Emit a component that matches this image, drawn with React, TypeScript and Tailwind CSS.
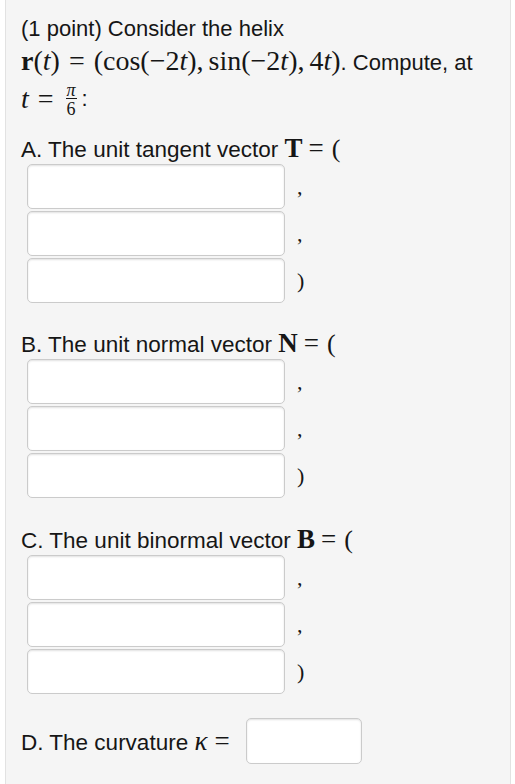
import React from 'react';

const serif = "font-['Liberation_Serif','Times_New_Roman',serif]";

function AnswerBox({ mark }: { mark: string }) {
  return (
    <div className="flex items-center">
      <div className="w-[258px] h-[45px] bg-white border border-[#cbcbcb] rounded-[5px] shadow-[inset_0_1px_2px_rgba(0,0,0,0.12)]" />
      <span className={`${serif} ml-[12px] text-[22px] leading-none`}>{mark}</span>
    </div>
  );
}

function VectorPart({ label, symbol, marginTop }: { label: string; symbol: string; marginTop: string }) {
  return (
    <div className={marginTop}>
      <div className="text-[22.5px] leading-[26px]">
        {label} <b className={`${serif} text-[27px]`}>{symbol}</b>
        <span className={`${serif} text-[27px] ml-[6px]`}>=</span>
        <span className={`${serif} text-[26px] ml-[8px]`}>(</span>
      </div>
      <div className="mt-[1px] ml-[6px] flex flex-col gap-[2px]">
        <AnswerBox mark="," />
        <AnswerBox mark="," />
        <AnswerBox mark=")" />
      </div>
    </div>
  );
}

export default function App() {
  return (
    <div className="h-[784px] overflow-hidden bg-white font-['Liberation_Sans',Arial,sans-serif] text-[#161616]">
      <div className="ml-[5px] w-[506px] h-full bg-[#f5f5f5] border-x border-[#e2e2e2] pl-[15px] pt-[13px]">
        <div className="text-[22px] leading-[32px]">
          <div>(1 point) Consider the helix</div>
          <div>
            <span className={`${serif} text-[28px]`}>
              <b>r</b>(<i>t</i>)<span className="mx-[9px]">=</span>(cos(−2<i>t</i>),<span className="ml-[5px]">sin(−2<i>t</i>),</span>
              <span className="ml-[5px]">4<i>t</i>)</span>
            </span>
            . Compute, at
          </div>
          <div className="flex items-center h-[40px]">
            <span className={`${serif} text-[28px]`}>
              <i>t</i>
              <span className="ml-[9px]">=</span>
            </span>
            <span className={`${serif} inline-flex flex-col items-center ml-[12px] text-[18px] leading-[16px]`}>
              <i className="px-[1px]">π</i>
              <span className="border-t border-[#161616] px-[1px] pt-[2px]">6</span>
            </span>
            <span className="ml-[5px]">:</span>
          </div>
        </div>

        <VectorPart label="A. The unit tangent vector" symbol="T" marginTop="mt-[16px]" />
        <VectorPart label="B. The unit normal vector" symbol="N" marginTop="mt-[27px]" />
        <VectorPart label="C. The unit binormal vector" symbol="B" marginTop="mt-[28px]" />

        <div className="mt-[24px] flex items-center">
          <span className="text-[22.5px]">
            D. The curvature <i className={`${serif} text-[27px]`}>κ</i>
            <span className={`${serif} text-[27px] ml-[7px]`}>=</span>
          </span>
          <div className="ml-[16px] w-[116px] h-[46px] bg-white border border-[#cbcbcb] rounded-[5px] shadow-[inset_0_1px_2px_rgba(0,0,0,0.12)]" />
        </div>
      </div>
    </div>
  );
}
